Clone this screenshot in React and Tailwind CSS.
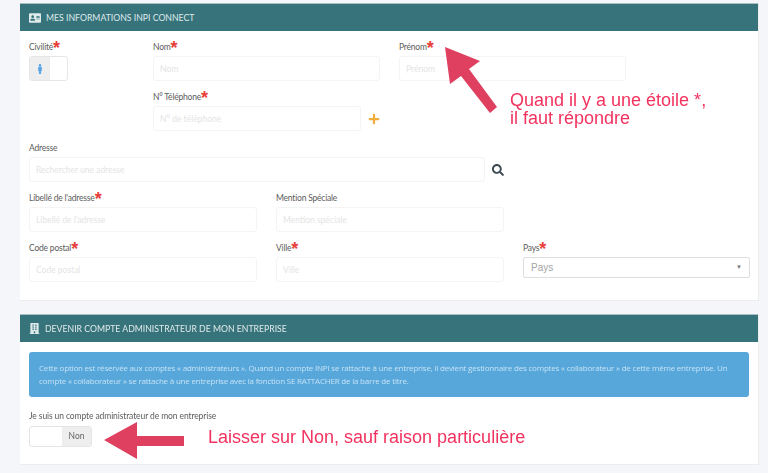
import React from 'react';
import { FaAddressCard, FaBuilding, FaMale, FaPlus, FaSearch } from 'react-icons/fa';

const Label = ({ children, required }) => (
    <div className="h-[15px] pb-[3px] flex items-end text-[8.5px] leading-[12px] text-[#5c5c5c] tracking-[-0.2px]">
        <span>{children}</span>
        {required && <span className="h-[15px] text-[18px] leading-[20px] text-[#e8403a] font-bold font-['Liberation_Sans',sans-serif]">*</span>}
    </div>
);

const Field = ({ label, placeholder, required, className = '' }) => (
    <div className={className}>
        <Label required={required}>{label}</Label>
        <input
            placeholder={placeholder}
            className="block w-full h-[25px] px-[6px] text-[8.5px] bg-white border border-[#f4f4f4] rounded-[3px] outline-none placeholder:text-[#e4e4e4]"
        />
    </div>
);

const CardHeader = ({ icon, children }) => (
    <div className="h-[28px] px-[9px] flex items-center gap-[5px] bg-[#37737b] border-t border-[#a9bfc1] text-[#dfeaeb] text-[8.7px] uppercase">
        {icon}
        <span>{children}</span>
    </div>
);

const App = () => {
    return (
        <div className="relative w-[768px] h-[473px] overflow-hidden bg-[#f5f6fa] pt-[3px] font-['Lato',sans-serif]">
            <div className="blur-[0.3px]">
                <div className="ml-[20px] w-[739px] h-[298px] bg-white border-b border-r border-[#ececec]">
                    <CardHeader icon={<FaAddressCard size={12} />}>Mes informations INPI Connect</CardHeader>
                    <div className="px-[9px] pt-[10px] flex flex-col gap-[10px]">
                        <div className="flex">
                            <div className="w-[124px]">
                                <Label required>Civilité</Label>
                                <div className="w-[39px] h-[25px] flex border border-[#e6e6e6] rounded-[3px]">
                                    <div className="w-[20px] bg-[#eeeeee] flex items-center justify-center text-[#5aa5e8]">
                                        <FaMale size={10} />
                                    </div>
                                </div>
                            </div>
                            <Field label="Nom" placeholder="Nom" required className="w-[227px]" />
                            <Field label="Prénom" placeholder="Prénom" required className="w-[227px] ml-[19px]" />
                        </div>
                        <div className="flex items-end pl-[124px]">
                            <Field label="N° Téléphone" placeholder="N° de téléphone" required className="w-[208px]" />
                            <FaPlus size={12} className="ml-[7px] mb-[6px] text-[#f0ad3c]" />
                        </div>
                        <div className="flex items-end mt-[1px]">
                            <Field label="Adresse" placeholder="Rechercher une adresse" className="w-[456px]" />
                            <FaSearch size={12} className="ml-[7px] mb-[6px] text-[#3d4a52]" />
                        </div>
                        <div className="grid grid-cols-[228px_228px_227px] gap-x-[19px] gap-y-[10px]">
                            <Field label="Libellé de l'adresse" placeholder="Libellé de l'adresse" required />
                            <Field label="Mention Spéciale" placeholder="Mention spéciale" />
                            <div className="row-span-2 flex flex-col justify-end">
                                <Label required>Pays</Label>
                                <div className="h-[21px] mb-[4px] px-[7px] flex items-center justify-between border border-[#dedede] rounded-[2px] text-[10px] text-[#a5a5a5] font-['Liberation_Sans',sans-serif]">
                                    <span>Pays</span>
                                    <span className="text-[6px] text-[#777]">▼</span>
                                </div>
                            </div>
                            <Field label="Code postal" placeholder="Code postal" required />
                            <Field label="Ville" placeholder="Ville" required />
                        </div>
                    </div>
                </div>

                <div className="ml-[20px] mt-[13px] w-[739px] h-[151px] bg-white border-b border-r border-[#ececec]">
                    <CardHeader icon={<FaBuilding size={11} />}>Devenir compte administrateur de mon entreprise</CardHeader>
                    <div className="px-[9px] pt-[10px]">
                        <div className="h-[45px] px-[10px] pt-[9px] bg-[#57a7db] rounded-[3px] text-[8px] tracking-[-0.2px] leading-[13px] text-[#c4e2f5] font-['Open_Sans',sans-serif]">
                            Cette option est réservée aux comptes « administrateurs ». Quand un compte INPI se rattache à une entreprise, il devient gestionnaire des comptes « collaborateur » de cette même entreprise. Un compte « collaborateur » se rattache à une entreprise avec la fonction SE RATTACHER de la barre de titre.
                        </div>
                        <div className="mt-[13px] text-[8.5px] leading-[12px] text-[#5c5c5c] tracking-[-0.1px]">Je suis un compte administrateur de mon entreprise</div>
                        <div className="mt-[4px] w-[63px] h-[21px] flex border border-[#e4e4e4] rounded-[3px]">
                            <div className="w-[32px]" />
                            <div className="flex-1 bg-[#eeeeee] flex items-center justify-center text-[8.5px] text-[#666]">Non</div>
                        </div>
                    </div>
                </div>
            </div>

            <svg className="absolute inset-0" width="768" height="473" viewBox="0 0 768 473">
                <polygon fill="#e0405f" points="445,47 480,61 469,69 497,107 490,113 461,76 450,84" />
                <polygon fill="#e0405f" points="104,440 137,422 137,436 184,436 184,446 137,446 137,459" />
            </svg>
            <div className="absolute left-[510px] top-[91px] text-[18px] leading-[18px] text-[#f2325f] font-['Liberation_Sans',sans-serif]">
                Quand il y a une étoile *,<br />il faut répondre
            </div>
            <div className="absolute left-[208px] top-[428px] text-[18px] leading-[18px] text-[#f2325f] font-['Liberation_Sans',sans-serif]">
                Laisser sur Non, sauf raison particulière
            </div>
        </div>
    );
};

export default App;
